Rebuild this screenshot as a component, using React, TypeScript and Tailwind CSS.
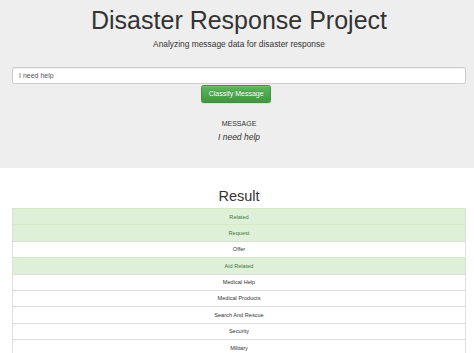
import React from 'react';

// Result categories; `hit` marks the ones the classifier flagged
const categories: { name: string; hit: boolean }[] = [
    { name: 'Related', hit: true },
    { name: 'Request', hit: true },
    { name: 'Offer', hit: false },
    { name: 'Aid Related', hit: true },
    { name: 'Medical Help', hit: false },
    { name: 'Medical Products', hit: false },
    { name: 'Search And Rescue', hit: false },
    { name: 'Security', hit: false },
    { name: 'Military', hit: false },
];

const App: React.FC = () => {
    return (
        <div className="h-[353px] overflow-hidden bg-white text-[#333] font-['Liberation_Sans',Arial,sans-serif]">
            {/* Jumbotron */}
            <div className="h-[168px] bg-[#eeeeee] pt-[7px]">
                <div className="pl-[12px] pr-[8px]">
                    <h1 className="text-center text-[25px] leading-[27.5px] font-normal">
                        Disaster Response Project
                    </h1>
                    <p className="mt-[3px] text-center text-[8.4px] leading-[12px]">
                        Analyzing message data for disaster response
                    </p>

                    <input
                        className="mt-[17.5px] block h-[17px] w-full rounded-[2.4px] border border-[#ccc] bg-white px-[6px] text-[7px] leading-[15px] text-[#555] shadow-[inset_0_1px_1px_rgba(0,0,0,0.075)] outline-none"
                        defaultValue="I need help"
                    />

                    <div className="mt-[1px] flex pl-[41.6667%]">
                        <button className="h-[18px] w-[70px] rounded-[2.4px] border border-[#3e8f3e] bg-gradient-to-b from-[#5cb85c] to-[#419641] text-[7px] leading-[16px] text-white shadow-[inset_0_1px_0_rgba(255,255,255,0.15),0_1px_1px_rgba(0,0,0,0.075)] [text-shadow:0_-1px_0_rgba(0,0,0,0.2)]">
                            Classify Message
                        </button>
                    </div>

                    <p className="mt-[15.6px] text-center text-[7px] leading-[10px]">MESSAGE</p>
                    <p className="mt-[2.4px] text-center text-[8.5px] leading-[12px] italic">I need help</p>
                </div>
            </div>

            {/* Result table */}
            <div className="pl-[12px] pr-[8px]">
                <h2 className="mt-[20px] text-center text-[14.5px] leading-[17px] font-normal">Result</h2>
                <div className="mt-[3px] border-x border-[#ddd]">
                    {categories.map((c) => (
                        <div
                            key={c.name}
                            className={
                                c.hit
                                    ? 'flex h-[16.4px] items-center justify-center border-t border-[#d6e9c6] bg-[#dff0d8] text-[5.6px] text-[#3c763d]'
                                    : 'flex h-[16.4px] items-center justify-center border-t border-[#ddd] bg-white text-[5.6px] text-[#333]'
                            }
                        >
                            {c.name}
                        </div>
                    ))}
                </div>
            </div>
        </div>
    );
};

export default App;
